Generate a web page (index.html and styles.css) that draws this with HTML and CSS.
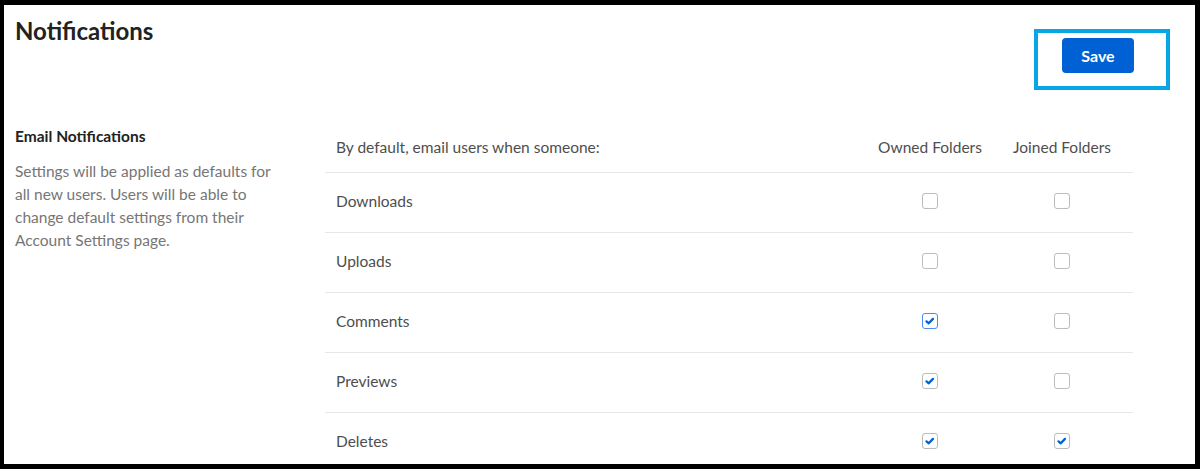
FILE: index.html
```html
<!DOCTYPE html>
<html lang="en">
<head>
<meta charset="utf-8">
<title>Notifications</title>
<link rel="stylesheet" href="styles.css">
</head>
<body>
<div class="frame">
  <div class="header">
    <h1 class="title">Notifications</h1>
    <div class="highlight">
      <button class="save-btn" type="button">Save</button>
    </div>
  </div>
  <div class="main">
    <div class="intro">
      <h2 class="intro-title">Email Notifications</h2>
      <p class="intro-text">Settings will be applied as defaults for all new users. Users will be able to change default settings from their Account Settings page.</p>
    </div>
    <div class="table">
      <div class="row head">
        <div class="cell label">By default, email users when someone:</div>
        <div class="cell col">Owned Folders</div>
        <div class="cell col">Joined Folders</div>
      </div>
      <div class="row">
        <div class="cell label">Downloads</div>
        <div class="cell col"><span class="cb"></span></div>
        <div class="cell col"><span class="cb"></span></div>
      </div>
      <div class="row">
        <div class="cell label">Uploads</div>
        <div class="cell col"><span class="cb"></span></div>
        <div class="cell col"><span class="cb"></span></div>
      </div>
      <div class="row">
        <div class="cell label">Comments</div>
        <div class="cell col"><span class="cb checked focus"><svg viewBox="0 0 16 16"><path d="M4 8.4 L6.6 10.6 L11.4 5.6" /></svg></span></div>
        <div class="cell col"><span class="cb"></span></div>
      </div>
      <div class="row">
        <div class="cell label">Previews</div>
        <div class="cell col"><span class="cb checked"><svg viewBox="0 0 16 16"><path d="M4 8.4 L6.6 10.6 L11.4 5.6" /></svg></span></div>
        <div class="cell col"><span class="cb"></span></div>
      </div>
      <div class="row last">
        <div class="cell label">Deletes</div>
        <div class="cell col"><span class="cb checked"><svg viewBox="0 0 16 16"><path d="M4 8.4 L6.6 10.6 L11.4 5.6" /></svg></span></div>
        <div class="cell col"><span class="cb checked"><svg viewBox="0 0 16 16"><path d="M4 8.4 L6.6 10.6 L11.4 5.6" /></svg></span></div>
      </div>
    </div>
  </div>
</div>
</body>
</html>
```

FILE: styles.css
```css
html, body {
  margin: 0;
  padding: 0;
  background: #000;
}
body {
  padding: 5px 5px 5px 4px;
  height: 469px;
  box-sizing: border-box;
  overflow: hidden;
  font-family: Lato, "Open Sans", "Liberation Sans", sans-serif;
}
.frame {
  background: #fff;
  height: 459px;
  box-sizing: border-box;
  padding: 11px 25px 0 11px;
  overflow: hidden;
}
.header {
  display: flex;
  justify-content: space-between;
  align-items: flex-start;
  height: 74px;
}
.title {
  margin: 0;
  font-size: 24px;
  line-height: 29px;
  font-weight: 700;
  color: #222;
}
.highlight {
  margin-top: 13px;
  border: 4px solid #08a6e6;
  padding: 5px 32px 13px 24px;
}
.save-btn {
  display: block;
  width: 72px;
  height: 35px;
  border: 0;
  border-radius: 4px;
  background: #0061d5;
  color: #fff;
  font-family: Lato, "Open Sans", "Liberation Sans", sans-serif;
  font-size: 16px;
  font-weight: 700;
  padding: 0;
}
.main {
  display: grid;
  grid-template-columns: 310px 808px;
  margin-top: 34px;
}
.intro-title {
  margin: 2px 0 0;
  font-size: 15.5px;
  line-height: 20px;
  font-weight: 700;
  color: #222;
}
.intro-text {
  margin: 14px 0 0;
  width: 268px;
  font-size: 15.5px;
  line-height: 23px;
  color: #767676;
}
.table {
  display: flex;
  flex-direction: column;
}
.row {
  display: grid;
  grid-template-columns: 1fr 132px 132px;
  padding-right: 5px;
  height: 60px;
  box-sizing: border-box;
  border-bottom: 1px solid #e8e8e8;
  align-items: center;
  font-size: 15.5px;
  color: #4e4e4e;
}
.row.head {
  height: 49px;
  padding-bottom: 2px;
}
.row.last {
  border-bottom: 0;
}
.label {
  padding-left: 11px;
  padding-bottom: 4px;
}
.row.head .label {
  padding-bottom: 0;
}
.col {
  display: flex;
  justify-content: center;
}
.row.head .col {
  white-space: nowrap;
}
.cb {
  width: 16px;
  height: 16px;
  box-sizing: border-box;
  border: 1px solid #bcbcbc;
  border-radius: 3px;
  background: #fff;
  display: block;
  margin-bottom: 4px;
}
.cb.focus {
  border-color: #4a8ef0;
}
.cb svg {
  display: block;
  width: 14px;
  height: 14px;
}
.cb svg path {
  fill: none;
  stroke: #0061d5;
  stroke-width: 2.6;
  stroke-linecap: round;
  stroke-linejoin: round;
}
```
